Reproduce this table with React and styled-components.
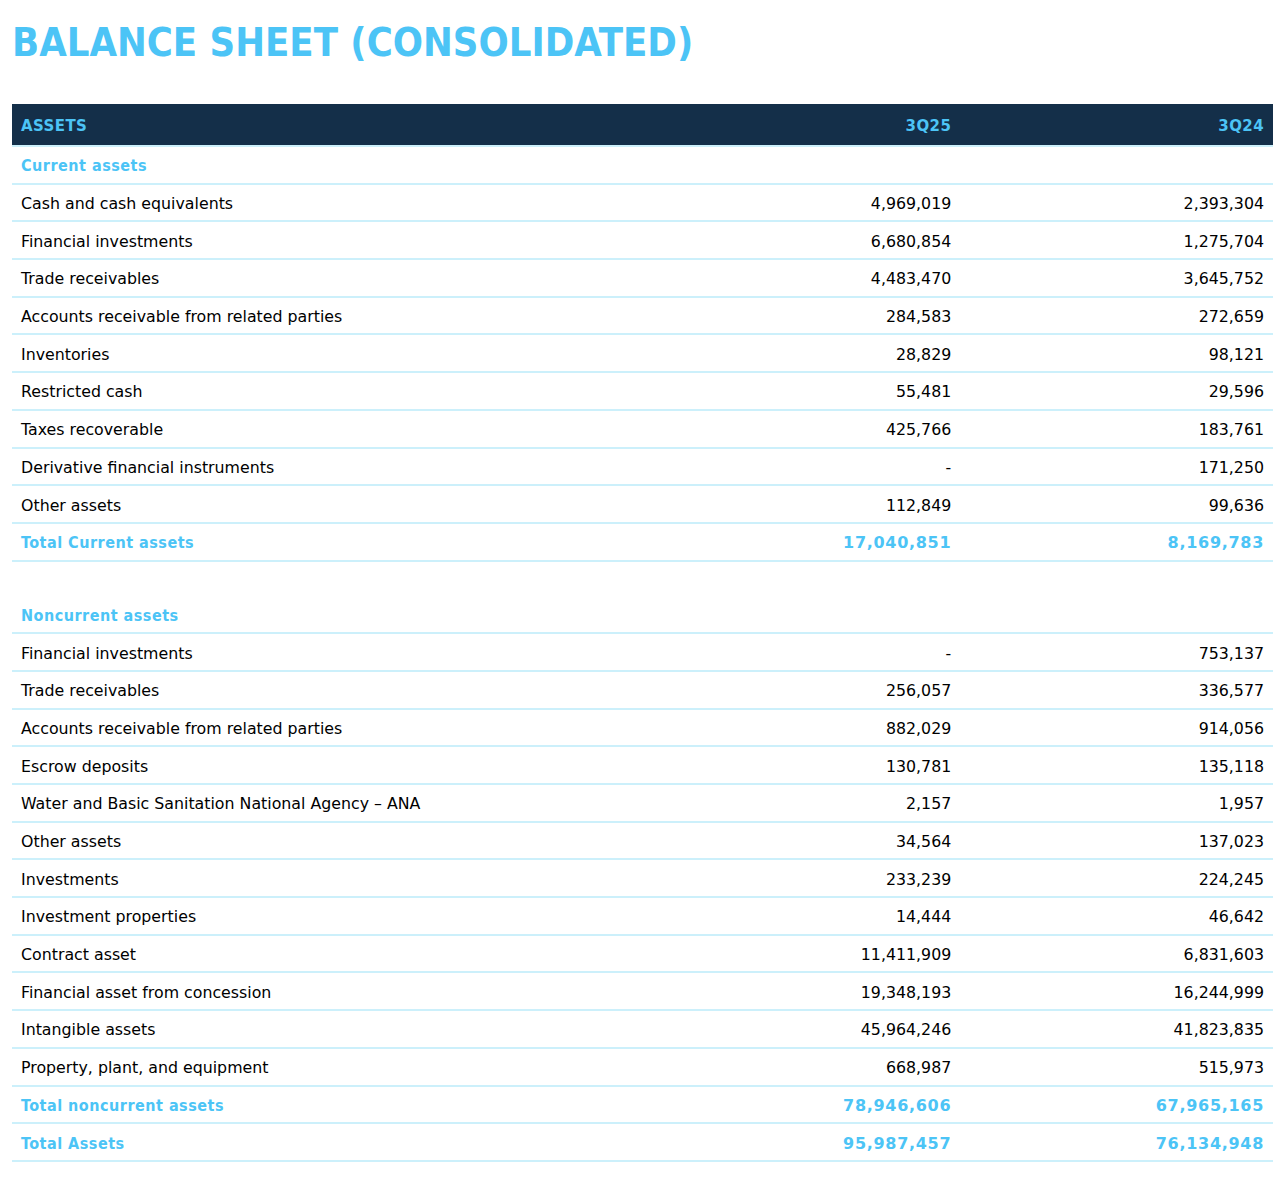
import styled, { createGlobalStyle } from "styled-components";

const GlobalStyle = createGlobalStyle`
  html, body {
    margin: 0;
    padding: 0;
    background: #ffffff;
  }
  body {
    font-family: "DejaVu Sans", sans-serif;
  }
`;

const Page = styled.div`
  padding: 18px 13px 16px 12px;
`;

const Heading = styled.h1`
  margin: 0 0 38px;
  font-family: "DejaVu Sans Condensed", "DejaVu Sans", sans-serif;
  font-size: 39.6px;
  line-height: 48px;
  font-weight: 700;
  color: #4cc4f6;
`;

const Table = styled.table`
  width: 100%;
  border-collapse: collapse;
  table-layout: fixed;
`;

const HeadRow = styled.tr`
  background: #142f49;
  border-bottom: 2px solid #ccf0fb;
`;

const HeadCell = styled.th`
  height: 39px;
  padding: 2px 9px 0;
  font-size: 15px;
  font-weight: 700;
  letter-spacing: 0.4px;
  color: #4cc4f6;
  text-align: ${(p) => (p.$num ? "right" : "left")};
`;

const Row = styled.tr`
  border-bottom: ${(p) => (p.$blank ? "none" : "2px solid #ccf0fb")};
`;

const Cell = styled.td`
  height: ${(p) => (p.$blank ? "33px" : "33.7px")};
  padding: 2px 9px 0;
  font-size: 15.8px;
  color: #000000;
  text-align: ${(p) => (p.$num ? "right" : "left")};
  white-space: nowrap;
`;

const AccentLabel = styled(Cell)`
  font-family: "DejaVu Sans Condensed", "DejaVu Sans", sans-serif;
  font-size: 16px;
  font-weight: 700;
  letter-spacing: 0.5px;
  color: #4cc4f6;
`;

const AccentNum = styled(Cell)`
  font-size: 16px;
  font-weight: 700;
  letter-spacing: 0.7px;
  color: #4cc4f6;
`;

const current = [
  ["Cash and cash equivalents", "4,969,019", "2,393,304"],
  ["Financial investments", "6,680,854", "1,275,704"],
  ["Trade receivables", "4,483,470", "3,645,752"],
  ["Accounts receivable from related parties", "284,583", "272,659"],
  ["Inventories", "28,829", "98,121"],
  ["Restricted cash", "55,481", "29,596"],
  ["Taxes recoverable", "425,766", "183,761"],
  ["Derivative financial instruments", "-", "171,250"],
  ["Other assets", "112,849", "99,636"],
];

const noncurrent = [
  ["Financial investments", "-", "753,137"],
  ["Trade receivables", "256,057", "336,577"],
  ["Accounts receivable from related parties", "882,029", "914,056"],
  ["Escrow deposits", "130,781", "135,118"],
  ["Water and Basic Sanitation National Agency \u2013 ANA", "2,157", "1,957"],
  ["Other assets", "34,564", "137,023"],
  ["Investments", "233,239", "224,245"],
  ["Investment properties", "14,444", "46,642"],
  ["Contract asset", "11,411,909", "6,831,603"],
  ["Financial asset from concession", "19,348,193", "16,244,999"],
  ["Intangible assets", "45,964,246", "41,823,835"],
  ["Property, plant, and equipment", "668,987", "515,973"],
];

function Line({ label, a, b }) {
  return (
    <Row>
      <Cell>{label}</Cell>
      <Cell $num>{a}</Cell>
      <Cell $num>{b}</Cell>
    </Row>
  );
}

function Total({ label, a, b }) {
  return (
    <Row>
      <AccentLabel>{label}</AccentLabel>
      <AccentNum $num>{a}</AccentNum>
      <AccentNum $num>{b}</AccentNum>
    </Row>
  );
}

function Section({ title }) {
  return (
    <Row>
      <AccentLabel colSpan={3}>{title}</AccentLabel>
    </Row>
  );
}

export default function App() {
  return (
    <>
      <GlobalStyle />
      <Page>
        <Heading>BALANCE SHEET (CONSOLIDATED)</Heading>
        <Table>
          <colgroup>
            <col style={{ width: "50.4%" }} />
            <col style={{ width: "24.8%" }} />
            <col style={{ width: "24.8%" }} />
          </colgroup>
          <thead>
            <HeadRow>
              <HeadCell>ASSETS</HeadCell>
              <HeadCell $num>3Q25</HeadCell>
              <HeadCell $num>3Q24</HeadCell>
            </HeadRow>
          </thead>
          <tbody>
            <Section title="Current assets" />
            {current.map(([l, a, b]) => (
              <Line key={"c" + l} label={l} a={a} b={b} />
            ))}
            <Total label="Total Current assets" a="17,040,851" b="8,169,783" />
            <Row $blank>
              <Cell $blank colSpan={3} />
            </Row>
            <Section title="Noncurrent assets" />
            {noncurrent.map(([l, a, b]) => (
              <Line key={"n" + l} label={l} a={a} b={b} />
            ))}
            <Total label="Total noncurrent assets" a="78,946,606" b="67,965,165" />
            <Total label="Total Assets" a="95,987,457" b="76,134,948" />
          </tbody>
        </Table>
      </Page>
    </>
  );
}
